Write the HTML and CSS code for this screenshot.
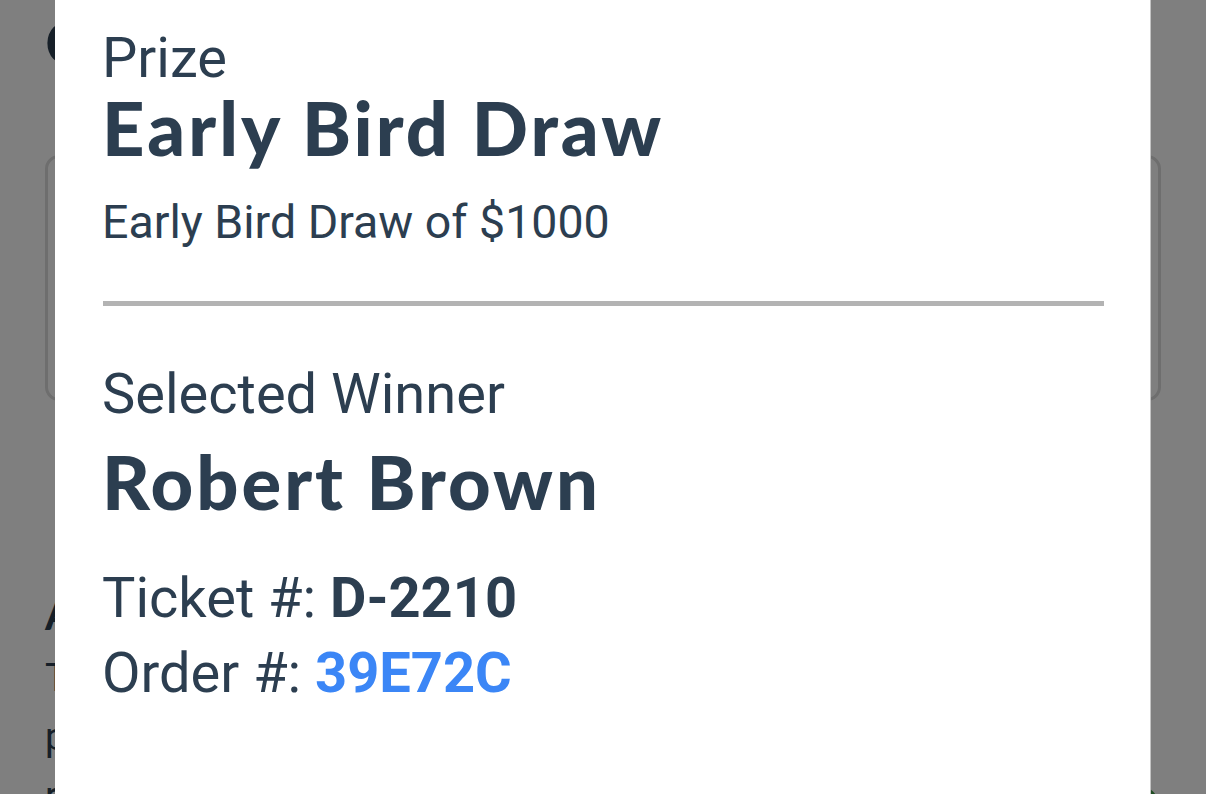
FILE: index.html
```html
<!DOCTYPE html>
<html lang="en">
<head>
<meta charset="utf-8">
<title>Draw Winner</title>
<link rel="stylesheet" href="styles.css">
</head>
<body>
<div class="page">
  <h1 class="page-title">Current Draws</h1>
  <div class="draw-card"></div>
  <h2 class="section-title">About this raffle</h2>
  <p class="section-text">The raffle supports our local programs<br>
  proceeds help fund scholarships<br>
  results are announced after each draw</p>
</div>
<div class="overlay"></div>
<div class="fab"></div>
<div class="modal">
  <div class="modal-body">
    <div class="label">Prize</div>
    <div class="heading">Early Bird Draw</div>
    <div class="subtitle">Early Bird Draw of $1000</div>
    <hr class="divider">
    <div class="label label-winner">Selected Winner</div>
    <div class="heading heading-winner">Robert Brown</div>
    <div class="detail detail-first">Ticket #: <strong class="ticket">D-2210</strong></div>
    <div class="detail">Order #: <strong class="order">39E72C</strong></div>
  </div>
</div>
</body>
</html>
```

FILE: styles.css
```css
html, body {
  margin: 0;
  padding: 0;
  height: 100%;
  overflow: hidden;
  background: #ffffff;
  font-family: Roboto, "Liberation Sans", sans-serif;
  color: #2c3e50;
}

.page {
  padding: 0 45px;
}

.page-title {
  margin: 0;
  padding-top: 6px;
  font-family: Lato, sans-serif;
  font-weight: 700;
  font-size: 62px;
  line-height: 70px;
  color: #2c3e50;
  white-space: nowrap;
}

.draw-card {
  margin-top: 79px;
  height: 240px;
  border: 3px solid #dcdcdc;
  border-radius: 14px;
}

.section-title {
  margin: 188px 0 0;
  font-family: Lato, sans-serif;
  font-weight: 700;
  font-size: 42px;
  line-height: 50px;
}

.section-text {
  margin: 10px 0 0;
  font-size: 38px;
  line-height: 59px;
  color: #2c3e50;
}

.overlay {
  position: fixed;
  inset: 0;
  background: rgba(0, 0, 0, 0.5);
}

.fab {
  position: fixed;
  left: 1085px;
  top: 780px;
  width: 80px;
  height: 80px;
  border-radius: 50%;
  background: #1e4d22;
}

.modal {
  position: fixed;
  left: 55px;
  top: 0;
  bottom: 0;
  width: 1095px;
  background: #ffffff;
  border-right: 1px solid #c4c4c4;
  z-index: 2;
}

.modal-body {
  padding: 28px 46px 0 47px;
}

.label {
  font-size: 56px;
  line-height: 60px;
  color: #2c3e50;
}

.heading {
  font-family: Lato, sans-serif;
  font-weight: 900;
  font-size: 74px;
  line-height: 80px;
  letter-spacing: 3px;
  color: #2c3e50;
}

.subtitle {
  margin-top: 26px;
  font-size: 46.5px;
  line-height: 56px;
}

.divider {
  margin: 51px 0 0 1px;
  border: 0;
  height: 5px;
  background: #b3b3b3;
}

.label-winner {
  margin-top: 58px;
}

.heading-winner {
  margin-top: 18px;
}

.detail {
  font-size: 56px;
  line-height: 75px;
}

.detail-first {
  margin-top: 39px;
}

.ticket {
  font-weight: 700;
  color: #2c3e50;
}

.order {
  font-weight: 700;
  color: #3b86f6;
}
```
